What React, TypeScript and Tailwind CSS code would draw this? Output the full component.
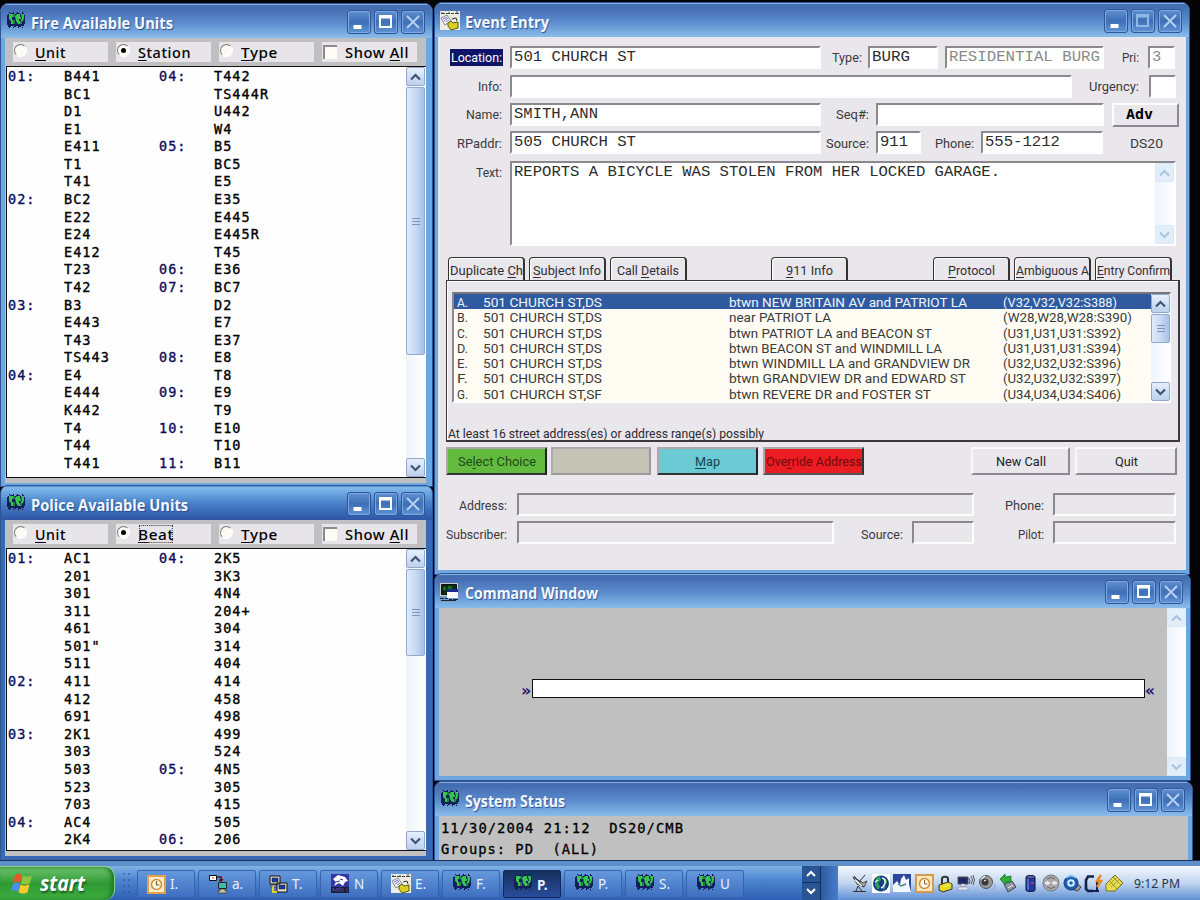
import React, { useLayoutEffect, useRef, useState } from "react";

/** One line of text squeezed or stretched to a given width. */
function Fit({ w, children, className = "" }: { w: number; children: React.ReactNode; className?: string }) {
  const ref = useRef<HTMLSpanElement>(null);
  const [k, setK] = useState(1);
  useLayoutEffect(() => {
    if (ref.current && ref.current.offsetWidth) setK(w / ref.current.getBoundingClientRect().width);
  }, []);
  return (
    <span className={`inline-block shrink-0 whitespace-pre ${className}`} style={{ width: w }}>
      <span ref={ref} className="inline-block origin-left" style={{ transform: `scaleX(${k})` }}>
        {children}
      </span>
    </span>
  );
}

const U = ({ children }: { children: React.ReactNode }) => (
  <span className="underline decoration-1 underline-offset-2">{children}</span>
);

/* ---------- icons ---------- */

const Globes = () => (
  <svg width="20" height="17" viewBox="0 0 20 17" className="-mt-[3px] shrink-0">
    <path d="M2 2h2V1h4v1h2V1h4v1h2V1h2v2h1v9h-1v2h-3v1h-3v-1h-2v1H8v-1H5v1H2v-2H1V3h1z" fill="#14205c" />
    <path d="M3 2h4v3H6v3h1v4H5v-3L3 7zM9 4l2-2h3v3h1v2h-2v2h1v3h-2l-2-3zM15 2h3v4l-1 3-2 1V7h1z" fill="#35c44e" />
    <path d="M7 2h2v3H7zM14 9h2v3h-2zM7 8h2v4H7z" fill="#1f7d4e" />
    <path d="M3 0h1v1H3zM7 0h1v1H7zM11 0h1v1h-1zM16 0h1v1h-1zM3 15h1v1H3zM7 15h1v1H7zM12 15h1v1h-1zM16 15h1v1h-1z" fill="#0b0f30" />
  </svg>
);

const EventIcon = () => (
  <svg width="20" height="20" viewBox="0 0 20 20" className="shrink-0">
    <path d="M0 0h20v19H0z" fill="#ecebe4" />
    <path d="M1 2.500h4M6 2.500h4M11 2.500h3M15 2.500h4M2 1v1M9 1v1M17 0v2" stroke="#444" />
    <path d="M1 7l6-3 4 6-6 4z" fill="#f4f4ff" stroke="#888" />
    <path d="M3 8l4-2M4 10l4-3M6 11l3-2" stroke="#7d74c0" />
    <path d="M8 12l3-2 2 2 5-1v6l-7 2-3-4z" fill="#d8d026" stroke="#5a5712" />
    <path d="M12 8l4-1 1 3" fill="none" stroke="#333" />
  </svg>
);

const CommandIcon = () => (
  <svg width="19" height="19" viewBox="0 0 19 19" className="mr-px shrink-0">
    <path d="M0 0h18v13H0z" fill="#c9c9c9" />
    <path d="M1.500 1.500h15v10h-15z" fill="#0b2b12" stroke="#111" />
    <path d="M3 4h3v3H3zM8 3h4v3H8z" fill="#1c6b2a" />
    <path d="M7 8h11v7H7z" fill="#fff" />
    <path d="M7 6h11v3H7z" fill="#1a2c8a" />
    <path d="M0 15.500h4M5 15.500h3M9 16.500h3M13 16.500h5M1 17.500h15" stroke="#223" />
  </svg>
);

const ClockIcon = () => (
  <svg width="19" height="19" viewBox="0 0 19 19" className="shrink-0">
    <rect x="1" y="1" width="17" height="17" fill="#fdebc8" stroke="#e3a248" strokeWidth="2" />
    <circle cx="9.500" cy="9.500" r="5" fill="#fffaf0" stroke="#cf8f3a" strokeWidth="1.600" />
    <path d="M9.500 6v4h3" fill="none" stroke="#8a5a18" strokeWidth="1.200" />
  </svg>
);

const AccessIcon = () => (
  <svg width="20" height="20" viewBox="0 0 20 20" className="shrink-0">
    <path d="M1.500 1.500h7v5h-7z" fill="#fff" stroke="#111" />
    <path d="M4 4h2" stroke="#c22" />
    <path d="M9 3h4v4l-2-1M13 7l2-2" fill="none" stroke="#611" strokeWidth="1.500" />
    <path d="M10.500 8.500h8v6h-8z" fill="#3fb8b8" stroke="#222" />
    <path d="M12 15h5v2h2v2h-9v-2h2z" fill="#c0c8a0" stroke="#222" strokeWidth=".6" />
  </svg>
);

const NetIcon = () => (
  <svg width="19" height="19" viewBox="0 0 19 19" className="shrink-0">
    <path d="M1 1h10v8H1zM8 8h10v9H8z" fill="#e4e0cc" stroke="#111" />
    <path d="M3 3h6v4H3zM10 10h6v4h-6z" fill="#1d3aa8" stroke="#111" strokeWidth=".5" />
    <path d="M2 10h5v2H2z" fill="#ddd" stroke="#111" strokeWidth=".6" />
    <path d="M4 12v5h4" fill="none" stroke="#e8d020" strokeWidth="2" />
  </svg>
);

const NameIcon = () => (
  <svg width="20" height="20" viewBox="0 0 20 20" className="shrink-0">
    <path d="M1 0h18v15H1z" fill="#3336a0" />
    <path d="M3 5l5-4 7 2 3 4-3 1-2 4-4-3-5 3 2-4z" fill="#fff" />
    <path d="M10 5l3 1M6 8l4-1" stroke="#3336a0" />
    <path d="M1 13h18v6H1z" fill="#1b1b3a" />
    <path d="M3 18v-4l2 3 2-3v4M9 18v-4h2v4M13 14v4M17 14v4" fill="none" stroke="#5b5ea8" strokeWidth=".7" />
  </svg>
);

const Flag = () => (
  <svg width="23" height="21" viewBox="0 0 23 21" className="shrink-0">
    <path d="M4 2c3-2 5-1 7 0L9 10c-2-1-4-2-7 0z" fill="#e8572a" />
    <path d="M12 2.500c3 1.500 5 1.500 9 0l-2 8c-3 1.500-6 1-9 0z" fill="#8cc63a" />
    <path d="M2 11c3-2 5-1 7 0l-2 8c-2-1-4-2-7 0z" fill="#4c8ff0" />
    <path d="M9.500 11.500c3 1.500 5 1.500 9 0l-2 8c-3 1.500-6 1-9 0z" fill="#f8c928" />
  </svg>
);

const trayIcons: React.ReactNode[] = [
  <g key="dish">
    <path d="M2 3l4 7 7 3 3-6-4 2z" fill="#b4b4b4" stroke="#444" />
    <path d="M3 2l10 11M14 1L8 8M5 17l2-5 4 5M2 17.500h13" fill="none" stroke="#333" />
    <path d="M4 6l7 6" stroke="#f4f4f4" strokeWidth="1.500" />
  </g>,
  <g key="globe">
    <path d="M0 0h18v19H0z" fill="#fff" />
    <circle cx="9" cy="9.500" r="8" fill="#173c86" />
    <path d="M4 4l4-2 1 4-3 3 2 4-2 3-3-5zM11 3l4 3v4l-3-2zM11 11l3 2-3 4z" fill="#2da05a" />
    <path d="M10 4q4 1 3 5t-4 5M3 8l3-2" stroke="#e8f2f8" strokeWidth="1.500" fill="none" />
  </g>,
  <g key="mail">
    <path d="M0 0h18v18H0z" fill="#2b469c" />
    <path d="M0 18v-7l4-4 3 4 1-6 3-4 2 5 3-2v6l2 8z" fill="#f2f7fb" />
    <path d="M5 10l3 2 5-2" fill="none" stroke="#4a7d96" strokeWidth="1.500" />
  </g>,
  <g key="clock">
    <rect x="1" y="1" width="17" height="17" fill="#fde6bd" stroke="#d79a48" strokeWidth="2" />
    <circle cx="9.500" cy="9.500" r="5" fill="#fffaf0" stroke="#c98d3e" strokeWidth="1.500" />
    <path d="M9.500 6v4h3" fill="none" stroke="#94601e" />
  </g>,
  <g key="lock">
    <path d="M6 10V5c0-3 6-3 6 0v5" fill="none" stroke="#333" strokeWidth="2" />
    <path d="M3 11l9-3 4 2v5l-9 3-4-2z" fill="#e4d91e" stroke="#333" />
    <path d="M7 13l8-3" stroke="#fff67a" />
  </g>,
  <g key="monitor">
    <path d="M1 3h10v7H1z" fill="#1d2766" stroke="#555" />
    <path d="M4 10h4v3H4zM1 14c2-2 8-2 10 0v2H1z" fill="#e4e6f2" stroke="#889" strokeWidth=".6" />
    <path d="M12 4q2 3 0 6M14 2q3 4 0 8M16 1q3 5 0 10" fill="none" stroke="#556" />
  </g>,
  <g key="speaker">
    <circle cx="8" cy="8" r="6.500" fill="#9a9a9a" stroke="#555" />
    <circle cx="7" cy="8" r="3.500" fill="#3a3a3a" />
    <path d="M3 5l4-3M6 7l2-1" stroke="#f2f2ff" strokeWidth="1.300" />
    <path d="M13 16q5-2 4-6" fill="none" stroke="#a5a5e0" strokeWidth="1.300" />
  </g>,
  <g key="eject">
    <path d="M5 10l8-3 4 6-8 5z" fill="#8c95a0" stroke="#445" />
    <path d="M1 5l5-5v3l6-1v6L6 8v3z" fill="#2fae35" stroke="#156b1c" strokeWidth=".7" />
    <path d="M9 14l5-3" stroke="#eee" />
  </g>,
  <g key="battery">
    <path d="M5 3c0-2 9-2 9 0v13c0 2-9 2-9 0z" fill="#2238a0" stroke="#0d1238" />
    <ellipse cx="9.500" cy="3" rx="4.500" ry="1.500" fill="#5a66b4" stroke="#111" strokeWidth=".6" />
    <path d="M7 5v11" stroke="#6478e0" strokeWidth="1.500" />
    <path d="M10 9h3" stroke="#c8405a" strokeWidth="1.500" />
  </g>,
  <g key="sync">
    <circle cx="9" cy="9" r="8" fill="#a9a9ad" stroke="#77777b" />
    <path d="M3 9h5M5.500 7v4M10 9h5M12.500 7v4" stroke="#e9e9e9" strokeWidth="1.800" />
    <path d="M5 5q4-3 8 0M5 13q4 3 8 0" fill="none" stroke="#666" />
  </g>,
  <g key="search">
    <path d="M11 7l7 6-3 4-7-2z" fill="#999" stroke="#444" />
    <circle cx="8" cy="9" r="7" fill="#1c5fb4" stroke="#123a7a" />
    <circle cx="8" cy="9" r="2.800" fill="none" stroke="#d8efff" strokeWidth="2" />
    <path d="M3 4q5-4 10 0" fill="none" stroke="#7fc8ef" strokeWidth="1.500" />
  </g>,
  <g key="cs">
    <path d="M10 2.500H4L2 6v9l2 2h5" fill="none" stroke="#17204e" strokeWidth="2.600" />
    <path d="M13 7v10M9 17h6" fill="none" stroke="#17204e" strokeWidth="2" />
    <path d="M17 1l-4 6h4l-4 6" fill="none" stroke="#e48b28" strokeWidth="2.500" />
  </g>,
  <g key="note">
    <path d="M1 10l9-9 8 8-8 8H1z" fill="#e5dc51" stroke="#77711a" />
    <path d="M4 11l7-7M6 13l8-7M8 3l8 8M5 7l7 8" stroke="#958e2d" strokeWidth=".8" />
  </g>,
];

/* ---------- window chrome ---------- */

function TitleButton({ kind, dim }: { kind: "min" | "max" | "close"; dim?: boolean }) {
  return (
    <div className="flex h-6 w-6 items-center justify-center rounded-[3px] border border-[#2c569c] bg-gradient-to-b from-[#5f90d0] via-[#3f6fb6] to-[#5f94d6] shadow-[inset_0_0_0_1px_#7fa9de]">
      <svg width="20" height="20" viewBox="0 0 20 20">
        {kind === "min" && <path d="M4.500 13h8v4h-8z" fill="#fff" />}
        {kind === "max" && (
          <path d="M3 3h13v13H3zM5 6.500v7.500h9V6.500z" fillRule="evenodd" fill={dim ? "#8fb8ea" : "#fff"} />
        )}
        {kind === "close" && <path d="M4 4l12 12M16 4L4 16" stroke="#b6d0f0" strokeWidth="2" />}
      </svg>
    </div>
  );
}

function Window({
  frame, title, titleWidth, icon, active, dim, pad, children,
}: {
  frame: string; title: string; titleWidth: number; icon: React.ReactNode; active?: boolean; dim?: boolean; pad: string; children: React.ReactNode;
}) {
  return (
    <section className={`absolute flex flex-col overflow-hidden rounded-t-lg border border-[#2d5596] ${active ? "bg-[#3a69b4]" : "bg-[#6ea6e0]"} ${frame}`}>
      <header
        className={`flex h-[34px] shrink-0 items-center border-t pl-[5px] pt-px ${
          active
            ? "border-[#5c92d2] bg-gradient-to-b from-[#7db6e8] from-5% via-[#4c86cc] via-45% to-[#2d55a4]"
            : "border-[#87afe0] bg-gradient-to-b from-[#456db2] from-10% via-[#5c8dcd] via-55% to-[#8abcea]"
        }`}
      >
        {icon}
        <Fit w={titleWidth} className="ml-[5px] pt-px font-['Open_Sans',sans-serif] text-[16px] font-bold leading-5 text-[#f4f8ff] [text-shadow:1px_1px_1px_#2c4f92]">
          {title}
        </Fit>
        <div className="ml-auto flex gap-[3px] pr-[7px]">
          <TitleButton kind="min" />
          <TitleButton kind="max" dim={dim} />
          <TitleButton kind="close" />
        </div>
      </header>
      <div className={`flex min-h-0 flex-1 flex-col ${pad}`}>{children}</div>
    </section>
  );
}

function ScrollButton({ down, faint }: { down?: boolean; faint?: boolean }) {
  return (
    <div
      className={`flex h-[19px] w-full shrink-0 items-center justify-center rounded-[2px] border ${
        faint ? "border-[#dbe8f6] bg-[#e2effb] text-[#a9c4de]" : "border-[#93a8c8] bg-gradient-to-b from-[#e6f0fc] to-[#bcd0ee] text-[#3f5474]"
      }`}
    >
      <svg width="11" height="8" viewBox="0 0 11 8">
        <path d={down ? "M1 1.500l4.500 4.500L10 1.500" : "M1 6.500L5.500 2 10 6.500"} fill="none" stroke="currentColor" strokeWidth="2.200" />
      </svg>
    </div>
  );
}

function ScrollBar({ thumb, faint, className = "" }: { thumb?: string; faint?: boolean; className?: string }) {
  return (
    <div className={`flex w-[19px] shrink-0 flex-col bg-gradient-to-r from-[#edf4fc] to-white ${className}`}>
      <ScrollButton faint={faint} />
      {thumb && (
        <div className={`mt-px flex flex-col items-center justify-center gap-px rounded-[2px] border border-[#8fa9cf] bg-gradient-to-r from-[#dfeafa] via-[#c9daf3] to-[#a9c0e6] ${thumb}`}>
          <i className="h-px w-2 bg-[#7d93b8]" />
          <i className="mt-px h-px w-2 bg-[#7d93b8]" />
          <i className="mt-px h-px w-2 bg-[#7d93b8]" />
        </div>
      )}
      <div className="flex-1" />
      <ScrollButton down faint={faint} />
    </div>
  );
}

/* ---------- unit lists ---------- */

type Row = [string, string, string, string];

const fireRows: Row[] = [
  ["01:", "B441", "04:", "T442"], ["", "BC1", "", "TS444R"], ["", "D1", "", "U442"], ["", "E1", "", "W4"],
  ["", "E411", "05:", "B5"], ["", "T1", "", "BC5"], ["", "T41", "", "E5"], ["02:", "BC2", "", "E35"],
  ["", "E22", "", "E445"], ["", "E24", "", "E445R"], ["", "E412", "", "T45"], ["", "T23", "06:", "E36"],
  ["", "T42", "07:", "BC7"], ["03:", "B3", "", "D2"], ["", "E443", "", "E7"], ["", "T43", "", "E37"],
  ["", "TS443", "08:", "E8"], ["04:", "E4", "", "T8"], ["", "E444", "09:", "E9"], ["", "K442", "", "T9"],
  ["", "T4", "10:", "E10"], ["", "T44", "", "T10"], ["", "T441", "11:", "B11"],
];

const policeRows: Row[] = [
  ["01:", "AC1", "04:", "2K5"], ["", "201", "", "3K3"], ["", "301", "", "4N4"], ["", "311", "", "204+"],
  ["", "461", "", "304"], ["", "501\"", "", "314"], ["", "511", "", "404"], ["02:", "411", "", "414"],
  ["", "412", "", "458"], ["", "691", "", "498"], ["03:", "2K1", "", "499"], ["", "303", "", "524"],
  ["", "503", "05:", "4N5"], ["", "523", "", "305"], ["", "703", "", "415"], ["04:", "AC4", "", "505"],
  ["", "2K4", "06:", "206"],
];

function Option({ children, w, on, box }: { children: React.ReactNode; w: number; on?: boolean; box?: boolean }) {
  return (
    <div className="flex h-5 w-[95px] items-center bg-[#e7e4ea] pl-px">
      {box ? (
        <span className="h-[14px] w-[14px] border-l-2 border-t-2 border-[#8c8a90] bg-[#fdfcf4]" />
      ) : (
        <span className="mb-1 flex h-[13px] w-[13px] items-center justify-center rounded-full border border-b-white border-l-[#777] border-r-white border-t-[#777] bg-[#fdfcf4]">
          {on && <i className="h-[5px] w-[5px] rounded-full bg-black" />}
        </span>
      )}
      <Fit w={w} className="ml-[8px] font-['Noto_Sans',sans-serif] text-[15px] font-medium leading-5 tracking-[0.6px] text-black">
        {children}
      </Fit>
    </div>
  );
}

function UnitPanel({ rows, thumb, second, secondWidth }: { rows: Row[]; thumb: string; second: React.ReactNode; secondWidth: number }) {
  return (
    <div className="flex min-h-0 flex-1 flex-col bg-[#c0bfc1] pb-[5px]">
      <div className="flex h-7 shrink-0 items-center gap-2 pl-[8px]">
        <Option w={31}><U>U</U>nit</Option>
        <Option w={secondWidth} on>{second}</Option>
        <Option w={37}><U>T</U>ype</Option>
        <Option w={64} box>Show <U>A</U>ll</Option>
      </div>
      <div className="ml-px flex min-h-0 flex-1 border border-r-0 border-[#111] bg-[#fefefe]">
        <div className="min-w-0 flex-1 pl-px pt-px font-['DejaVu_Sans_Mono',monospace] text-[13.5px] tracking-[1.05px] text-black [-webkit-text-stroke:0.35px_black]">
          {rows.map((r, i) => (
            <div key={i} className="grid h-[17.58px] grid-cols-[56px_95px_55px_1fr] whitespace-pre leading-[17.58px]">
              <span className="text-[#0d0d5c] [-webkit-text-stroke:0.35px_#0d0d5c]">{r[0]}</span>
              <span>{r[1]}</span>
              <span className="text-[#0d0d5c] [-webkit-text-stroke:0.35px_#0d0d5c]">{r[2]}</span>
              <span>{r[3]}</span>
            </div>
          ))}
        </div>
        <ScrollBar thumb={thumb} className="mr-px" />
      </div>
    </div>
  );
}

/* ---------- event entry ---------- */

function Label({ w, text, box, hot }: { w: number; text: string; box: string; hot?: boolean }) {
  return (
    <div className={`flex shrink-0 items-center justify-end ${box}`}>
      <Fit w={w} className={`font-['Roboto',sans-serif] text-[13.5px] leading-[15px] ${hot ? "bg-[#0f1468] text-white outline outline-1 outline-[#0f1468]" : "text-[#3a3a3d]"}`}>
        {text}
      </Fit>
    </div>
  );
}

function Field({ box, text, chars, grey, flat }: { box: string; text?: string; chars?: number; grey?: boolean; flat?: boolean }) {
  return (
    <div className={`flex h-[23px] shrink-0 items-center overflow-hidden border-b-2 border-l-2 border-r-2 border-t-2 border-b-white border-l-[#8b898e] border-r-white border-t-[#8b898e] pl-[2px] ${flat ? "bg-[#e9e6ec]" : "bg-white"} ${box}`}>
      {text && (
        <Fit w={chars ?? text.length * 9.25} className={`-mt-[2px] font-['Liberation_Mono',monospace] text-[15.5px] leading-5 ${grey ? "text-[#8a8a8a]" : "text-[#2c2c2c]"}`}>
          {text}
        </Fit>
      )}
    </div>
  );
}

function Tab({ children, w, box }: { children: React.ReactNode; w: number; box: string }) {
  return (
    <div className={`flex h-6 w-[77px] shrink-0 items-center justify-center overflow-hidden rounded-t-[4px] border border-r-2 border-b-0 border-[#333] pt-px shadow-[inset_1px_1px_0_#fff] ${box}`}>
      <Fit w={w} className="font-['Roboto',sans-serif] text-[13.5px] leading-5 text-[#2f2f32]">{children}</Fit>
    </div>
  );
}

const choices: [string, string, string, number, string, number][] = [
  ["A.", "501 CHURCH ST,DS", "btwn NEW BRITAIN AV and PATRIOT LA", 238, "(V32,V32,V32:S388)", 114],
  ["B.", "501 CHURCH ST,DS", "near PATRIOT LA", 102, "(W28,W28,W28:S390)", 129],
  ["C.", "501 CHURCH ST,DS", "btwn PATRIOT LA and BEACON ST", 203, "(U31,U31,U31:S392)", 118],
  ["D.", "501 CHURCH ST,DS", "btwn BEACON ST and WINDMILL LA", 213, "(U31,U31,U31:S394)", 118],
  ["E.", "501 CHURCH ST,DS", "btwn WINDMILL LA and GRANDVIEW DR", 241, "(U32,U32,U32:S396)", 118],
  ["F.", "501 CHURCH ST,DS", "btwn GRANDVIEW DR and EDWARD ST", 237, "(U32,U32,U32:S397)", 118],
  ["G.", "501 CHURCH ST,SF", "btwn REVERE DR and FOSTER ST", 202, "(U34,U34,U34:S406)", 118],
];

function Button({ box, w, children, text = "text-[#222]" }: { box: string; w?: number; children?: React.ReactNode; text?: string }) {
  return (
    <div className={`flex h-7 shrink-0 items-center justify-center border-2 ${box}`}>
      {w && <Fit w={w} className={`font-['Roboto',sans-serif] text-[13.5px] leading-5 ${text}`}>{children}</Fit>}
    </div>
  );
}

function EventEntry() {
  return (
    <div className="flex flex-1 flex-col bg-[#e9e6ec] pt-[9px]">
      <div className="flex h-[29px] items-start">
        <Label box="h-[23px] w-[64px]" w={51} text="Location:" hot />
        <Field box="ml-2 w-[311px]" text="501 CHURCH ST" chars={122} />
        <Label box="h-[23px] w-[41px]" w={30} text="Type:" />
        <Field box="ml-[6px] w-[70px]" text="BURG" chars={38} />
        <Field box="ml-[7px] w-[159px]" text="RESIDENTIAL BURG" chars={151} grey />
        <Label box="h-[23px] w-[35px]" w={17} text="Pri:" />
        <Field box="ml-[9px] w-[27px]" text="3" grey />
      </div>
      <div className="flex h-[28px] items-start">
        <Label box="h-[23px] w-[64px]" w={24} text="Info:" />
        <Field box="ml-2 w-[562px]" />
        <Label box="h-[23px] w-[67px]" w={50} text="Urgency:" />
        <Field box="ml-[10px] w-[27px]" />
      </div>
      <div className="flex h-[28px] items-start">
        <Label box="h-[23px] w-[64px]" w={36} text="Name:" />
        <Field box="ml-2 w-[311px]" text="SMITH,ANN" chars={84} />
        <Label box="h-[23px] w-[48px]" w={33} text="Seq#:" />
        <Field box="ml-[7px] w-[228px]" />
        <div className="ml-[8px] flex h-6 w-[67px] items-center justify-center border-2 border-b-[#8c8a90] border-l-white border-r-[#8c8a90] border-t-white pr-3">
          <Fit w={27} className="-mt-[3px] font-['DejaVu_Sans_Mono',monospace] text-[14px] font-bold leading-5 text-black">Adv</Fit>
        </div>
      </div>
      <div className="flex h-[30px] items-start">
        <Label box="h-[25px] w-[64px]" w={45} text="RPaddr:" />
        <Field box="ml-2 w-[311px]" text="505 CHURCH ST" chars={122} />
        <Label box="h-[25px] w-[48px]" w={43} text="Source:" />
        <Field box="ml-[7px] w-[45px]" text="911" chars={28} />
        <Label box="h-[25px] w-[53px]" w={39} text="Phone:" />
        <Field box="ml-[7px] w-[122px]" text="555-1212" chars={75} />
        <Label box="h-[25px] w-[60px]" w={33} text="DS20" />
      </div>
      <div className="flex h-[85px] items-start">
        <Label box="h-[22px] w-[64px]" w={26} text="Text:" />
        <div className="ml-2 flex h-[85px] w-[666px] border-2 border-b-white border-l-[#8b898e] border-r-white border-t-[#8b898e] bg-white pl-[2px]">
          <Fit w={486} className="-mt-px font-['Liberation_Mono',monospace] text-[15.5px] leading-[20px] text-[#2c2c2c]">
            REPORTS A BICYCLE WAS STOLEN FROM HER LOCKED GARAGE.
          </Fit>
          <ScrollBar faint className="ml-auto" />
        </div>
      </div>

      <div className="mt-[11px] flex h-6 shrink-0 pl-[10px]">
        <Tab w={73} box="">Duplicate <U>C</U>h</Tab>
        <Tab w={68} box="ml-1"><U>S</U>ubject Info</Tab>
        <Tab w={62} box="ml-1">Call <U>D</U>etails</Tab>
        <Tab w={47} box="ml-[84px]"><U>9</U>11 Info</Tab>
        <Tab w={47} box="ml-[85px]"><U>P</U>rotocol</Tab>
        <Tab w={73} box="ml-1"><U>A</U>mbiguous A</Tab>
        <Tab w={73} box="ml-1"><U>E</U>ntry Confirm</Tab>
      </div>
      <div className="-mt-px ml-[8px] flex h-[162px] w-[734px] shrink-0 flex-col border border-b-2 border-r-2 border-[#3a3a3d] pl-[5px] pt-[11px] shadow-[inset_1px_1px_0_#fff]">
        <div className="flex h-[111px] w-[719px] shrink-0 border border-b-2 border-l-2 border-t-2 border-b-white border-l-[#8b898e] border-r-white border-t-[#77757c] bg-[#fffdf3]">
          <div className="min-w-0 flex-1 font-['Roboto',sans-serif] text-[13.5px]">
            {choices.map((c, i) => (
              <div key={c[0]} className={`grid h-[15.3px] grid-cols-[26px_246px_274px_1fr] pl-[3px] leading-[16px] ${i === 0 ? "bg-[#2f5a9f] text-[#f0f6ff]" : "text-[#3a3a3a]"}`}>
                <Fit w={11}>{c[0]}</Fit>
                <Fit w={119}>{c[1]}</Fit>
                <Fit w={c[3]}>{c[2]}</Fit>
                <Fit w={c[5]}>{c[4]}</Fit>
              </div>
            ))}
          </div>
          <ScrollBar thumb="h-[29px]" />
        </div>
        <Fit w={316} className="-ml-[4px] mt-[20px] font-['Roboto',sans-serif] text-[13.5px] leading-5 text-[#2c2c2c]">
          At least 16 street address(es) or address range(s) possibly
        </Fit>
      </div>

      <div className="mt-[5px] flex shrink-0 pl-[8px]">
        <Button box="w-[101px] bg-[#62bb3f] border-b-[#333] border-r-[#222] border-l-[#aaa] border-t-[#aaa]" w={78} text="text-[#1c4a14]">Se<U>l</U>ect Choice</Button>
        <Button box="ml-[4px] w-[100px] bg-[#c4c4b6] border-b-[#9a9a9a] border-r-[#9a9a9a] border-l-[#aaa] border-t-[#aaa]" />
        <Button box="ml-[6px] w-[101px] bg-[#6ccad5] border-b-[#333] border-r-[#222] border-l-[#aaa] border-t-[#aaa]" w={25} text="text-[#14424a]"><U>M</U>ap</Button>
        <Button box="ml-[5px] w-[101px] bg-[#ea1d22] border-b-[#555] border-r-[#333] border-l-[#aaa] border-t-[#aaa]" w={96} text="text-[#6d0a0c]">Ove<U>r</U>ride Address</Button>
        <Button box="ml-[107px] w-[99px] border-b-[#8c8a90] border-l-[#f8f8f8] border-r-[#8c8a90] border-t-[#f8f8f8]" w={50}>New Call</Button>
        <Button box="ml-[5px] w-[102px] border-b-[#8c8a90] border-l-[#f8f8f8] border-r-[#8c8a90] border-t-[#f8f8f8]" w={23}>Quit</Button>
      </div>

      <div className="mt-[18px] flex h-[28px] shrink-0 items-start">
        <Label box="h-[25px] w-[69px]" w={48} text="Address:" />
        <Field box="ml-[10px] w-[457px]" flat />
        <Label box="h-[25px] w-[70px]" w={39} text="Phone:" />
        <Field box="ml-[9px] w-[123px]" flat />
      </div>
      <div className="flex shrink-0 items-start">
        <Label box="h-[26px] w-[69px]" w={61} text="Subscriber:" />
        <Field box="ml-[10px] w-[317px]" flat />
        <Label box="h-[26px] w-[69px]" w={42} text="Source:" />
        <Field box="ml-[9px] w-[62px]" flat />
        <Label box="h-[26px] w-[70px]" w={26} text="Pilot:" />
        <Field box="ml-[9px] w-[123px]" flat />
      </div>
    </div>
  );
}

/* ---------- task bar ---------- */

const tasks: { icon: React.ReactNode; label: string; on?: boolean }[] = [
  { icon: <ClockIcon />, label: "I." },
  { icon: <AccessIcon />, label: "a." },
  { icon: <NetIcon />, label: "T." },
  { icon: <NameIcon />, label: "N" },
  { icon: <EventIcon />, label: "E." },
  { icon: <Globes />, label: "F." },
  { icon: <Globes />, label: "P.", on: true },
  { icon: <Globes />, label: "P." },
  { icon: <Globes />, label: "S." },
  { icon: <Globes />, label: "U" },
];

function TaskBar() {
  return (
    <footer className="absolute left-0 top-[860px] flex h-10 w-[1200px] items-stretch border-t border-[#1b3560] bg-[#5d90c8] pt-[5px]">
      <div className="flex flex-1 bg-gradient-to-b from-[#7fb2e6] via-[#4d86cf] via-40% to-[#2f5fb4]">
        <div className="flex w-[115px] items-center rounded-r-[10px] border-r border-t border-[#8bd28c] bg-gradient-to-b from-[#6cc46c] via-[#2f9a35] via-50% to-[#3fae3f] pl-[11px] shadow-[inset_-3px_0_4px_#1f7a28]">
          <Flag />
          <Fit w={45} className="-mt-[2px] ml-[6px] font-['Open_Sans',sans-serif] text-[21px] font-bold italic leading-6 text-white [text-shadow:1px_2px_2px_#1c5a20]">start</Fit>
        </div>
        <div className="grid w-[22px] grid-cols-2 content-center justify-center gap-1 px-2 opacity-50">
          {Array.from({ length: 8 }, (_, i) => (
            <i key={i} className="h-[2px] w-[2px] rounded-full bg-[#1c3f86]" />
          ))}
        </div>
        <div className="flex items-center gap-[3px] pt-[2px]">
          {tasks.map((t, i) => (
            <div
              key={i}
              className={`flex h-7 w-[58px] items-center gap-1 rounded-[2px] border pl-[9px] ${
                t.on ? "border-[#14285c] bg-gradient-to-b from-[#16305e] to-[#2a4c9c]" : "border-[#3763ab] bg-gradient-to-b from-[#6598dc] to-[#3f6fc0]"
              }`}
            >
              {t.icon}
              <span className={`font-['Noto_Sans',sans-serif] text-[13.5px] leading-5 text-[#e8f2ff] ${t.on ? "pt-[2px] font-bold" : "-mt-px"}`}>{t.label}</span>
            </div>
          ))}
        </div>
      </div>
      <div className="flex w-[36px] shrink-0 bg-gradient-to-r from-[#2c5a9e] from-50% to-[#4a7ccc]">
        <div className="flex w-[19px] flex-col gap-px bg-[#12305e]">
          <svg width="18" height="16" viewBox="0 0 18 16" className="bg-[#2a5594]"><path d="M5 10l4-4 4 4" fill="none" stroke="#fff" strokeWidth="2" /></svg>
          <svg width="18" height="17" viewBox="0 0 18 17" className="bg-[#2a5594]"><path d="M5 6l4 4 4-4" fill="none" stroke="#fff" strokeWidth="2" /></svg>
        </div>
      </div>
      <div className="flex w-[362px] shrink-0 items-center bg-gradient-to-b from-[#f4f8fd] via-[#c2d6f0] via-50% to-[#5f8fd4] pl-[13px]">
        <div className="flex gap-[2.200px]">
          {trayIcons.map((g, i) => (
            <svg key={i} width="19" height="19" viewBox="0 0 19 19">{g}</svg>
          ))}
        </div>
        <Fit w={46} className="ml-[10px] font-['Noto_Sans',sans-serif] text-[13px] leading-5 text-[#26324a]">9:12 PM</Fit>
      </div>
    </footer>
  );
}

export default function App() {
  return (
    <div className="relative h-[900px] w-[1200px] overflow-hidden bg-[#050507]">
      <Window frame="left-0 top-[3px] h-[484px] w-[433px]" title="Fire Available Units" titleWidth={142} icon={<Globes />} pad="pl-1 pr-[6px] pb-[3px]">
        <UnitPanel rows={fireRows} thumb="h-[268px]" second={<><U>S</U>tation</>} secondWidth={53} />
      </Window>
      <Window frame="left-0 top-[485px] h-[377px] w-[433px]" title="Police Available Units" titleWidth={157} icon={<Globes />} active pad="pl-1 pr-[6px] pb-[5px]">
        <UnitPanel rows={policeRows} thumb="h-[87px]" second={<span className="outline-dotted outline-1 -outline-offset-2 outline-[#333]"><U>B</U>eat</span>} secondWidth={36} />
      </Window>
      <Window frame="left-[434px] top-[2px] h-[573px] w-[756px]" title="Event Entry" titleWidth={84} icon={<EventIcon />} dim pad="pl-[3px] pr-[3px] pb-[4px]">
        <EventEntry />
      </Window>
      <Window frame="left-[434px] top-[573px] h-[208px] w-[757px]" title="Command Window" titleWidth={133} icon={<CommandIcon />} pad="pl-1 pr-[4px] pb-[4px]">
        <div className="flex min-h-0 flex-1 bg-[#c0c0c0]">
          <div className="flex flex-1 items-center pb-[2px] pl-[82px] font-['DejaVu_Sans_Mono',monospace] text-[16px] text-[#10106a]">
            <Fit w={10} className="font-bold leading-5">»</Fit>
            <div className="mb-[6px] ml-px h-[19px] w-[613px] border border-[#111] bg-white" />
            <Fit w={10} className="font-bold leading-5">«</Fit>
          </div>
          <ScrollBar faint />
        </div>
      </Window>
      <Window frame="left-[434px] top-[781px] h-[90px] w-[759px]" title="System Status" titleWidth={100} icon={<Globes />} pad="pl-1 pr-[4px]">
        <div className="flex flex-1 flex-col bg-[#c0c0c0] pl-[2px] pt-[2px] font-['DejaVu_Sans_Mono',monospace] text-[13.5px] leading-[21px] tracking-[1px] text-black [-webkit-text-stroke:0.3px_black]">
          <Fit w={243}>11/30/2004 21:12  DS20/CMB</Fit>
          <Fit w={158}>Groups: PD  (ALL)</Fit>
        </div>
      </Window>
      <TaskBar />
    </div>
  );
}
